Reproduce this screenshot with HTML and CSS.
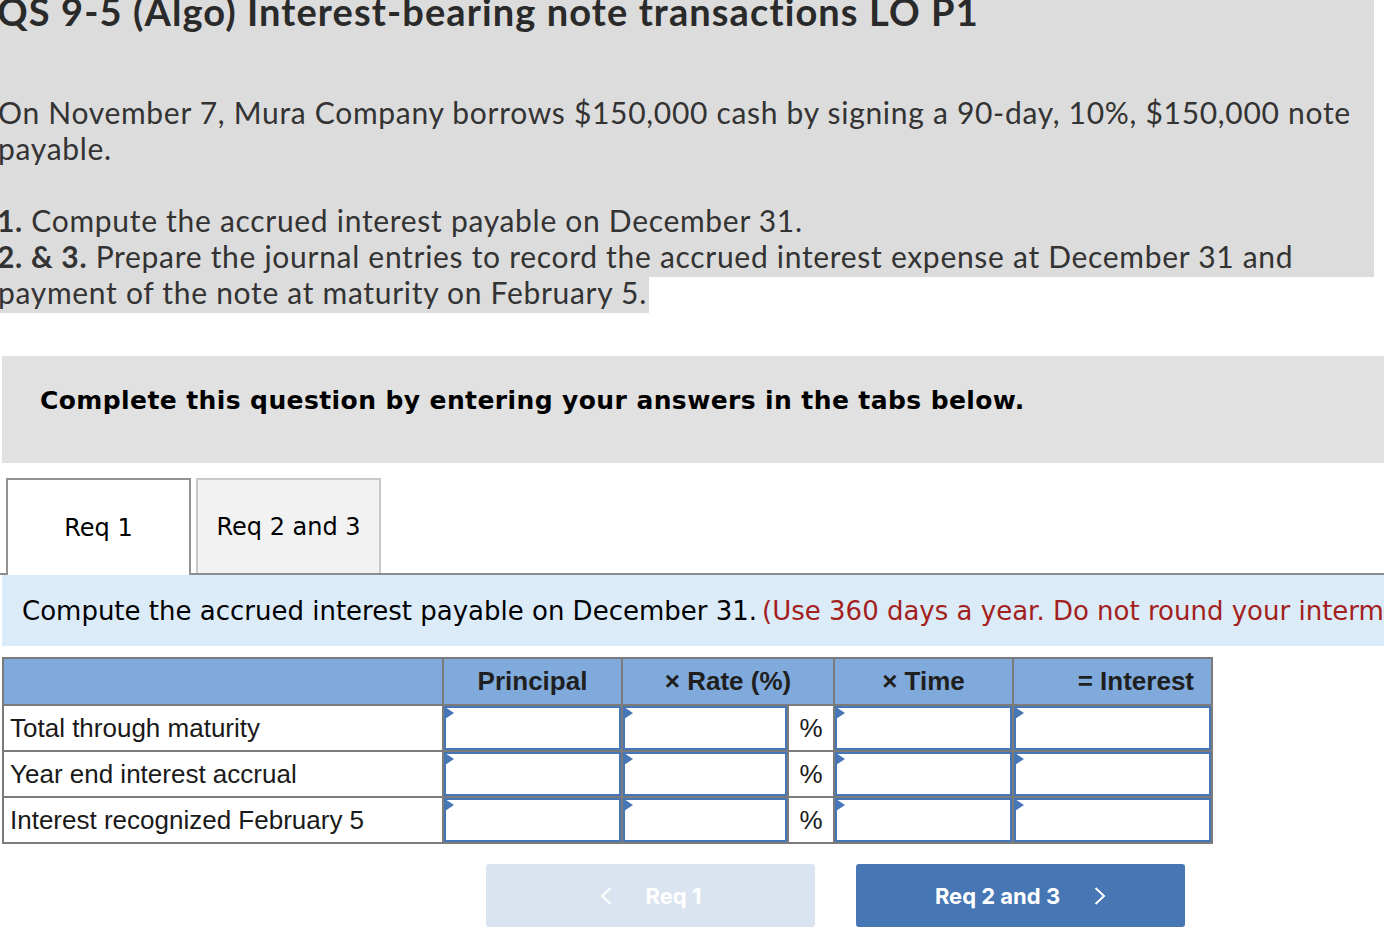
FILE: index.html
```html
<!DOCTYPE html>
<html>
<head>
<meta charset="utf-8">
<link rel="stylesheet" href="styles.css">
</head>
<body>
<div class="intro">
  <h1 class="title">QS 9-5 (Algo) Interest-bearing note transactions LO P1</h1>
  <p class="lead">On November 7, Mura Company borrows $150,000 cash by signing a 90-day, 10%, $150,000 note<br>payable.</p>
  <p class="reqs"><b>1.</b> Compute the accrued interest payable on December 31.<br><b>2. &amp; 3.</b> Prepare the journal entries to record the accrued interest expense at December 31 and</p>
</div>
<div class="tail"><span class="tail-text">payment of the note at maturity on February 5.</span></div>

<div class="notice">Complete this question by entering your answers in the tabs below.</div>

<div class="tabs">
  <div class="tab tab-active">Req 1</div>
  <div class="tab tab-idle">Req 2 and 3</div>
</div>

<div class="instr">Compute the accrued interest payable on December 31. <span class="hint">(Use 360 days a year. Do not round your intermediate calculations. Round your final answers to the nearest whole dollar.)</span></div>

<div class="grid">
  <div class="hd hd-label"></div>
  <div class="hd">Principal</div>
  <div class="hd hd-rate">× Rate (%)</div>
  <div class="hd">× Time</div>
  <div class="hd hd-int">= Interest</div>

  <div class="lbl">Total through maturity</div>
  <div class="inp"></div>
  <div class="inp"></div>
  <div class="pct">%</div>
  <div class="inp"></div>
  <div class="inp"></div>

  <div class="lbl">Year end interest accrual</div>
  <div class="inp"></div>
  <div class="inp"></div>
  <div class="pct">%</div>
  <div class="inp"></div>
  <div class="inp"></div>

  <div class="lbl">Interest recognized February 5</div>
  <div class="inp"></div>
  <div class="inp"></div>
  <div class="pct">%</div>
  <div class="inp"></div>
  <div class="inp"></div>
</div>

<div class="nav">
  <div class="btn btn-prev">
    <svg class="chev" width="12" height="18" viewBox="0 0 12 18"><path d="M10.5 1 L2 9 L10.5 17" fill="none" stroke="#ffffff" stroke-width="2"/></svg>
    <span>Req 1</span>
  </div>
  <div class="btn btn-next">
    <span>Req 2 and 3</span>
    <svg class="chev" width="12" height="18" viewBox="0 0 12 18"><path d="M1.5 1 L10 9 L1.5 17" fill="none" stroke="#ffffff" stroke-width="2"/></svg>
  </div>
</div>
</body>
</html>
```
FILE: styles.css
```css
html, body {
  margin: 0;
  padding: 0;
  background: #ffffff;
}
body {
  width: 1396px;
  height: 936px;
  overflow: hidden;
}
.intro {
  display: flow-root;
  width: 1374px;
  height: 277px;
  background: #dcdcdc;
  color: #333333;
  font-family: Lato, "Open Sans", sans-serif;
}
.title {
  margin: -9px 0 0 -3px;
  font-size: 38px;
  line-height: 40px;
  font-weight: 700;
  letter-spacing: 1.1px;
  color: #2a2a2a;
}
.lead {
  margin: 63px 0 0 -2px;
  font-size: 30px;
  line-height: 36px;
  letter-spacing: 0.7px;
}
.reqs {
  margin: 36px 0 0 -3px;
  font-size: 30px;
  line-height: 36px;
  letter-spacing: 0.7px;
}
.reqs b {
  font-weight: 700;
}
.tail {
  height: 36px;
  font-family: Lato, "Open Sans", sans-serif;
  font-size: 30px;
  color: #333333;
}
.tail-text {
  display: block;
  width: fit-content;
  line-height: 31px;
  padding-bottom: 5px;
  background: #dcdcdc;
  margin-left: -2px;
  padding-right: 2px;
  letter-spacing: 0.7px;
}
.notice {
  margin: 43px 0 0 2px;
  width: 1382px;
  height: 107px;
  box-sizing: border-box;
  padding: 0 0 18px 38px;
  background: #e1e1e1;
  display: flex;
  align-items: center;
  font-family: "DejaVu Sans", Verdana, sans-serif;
  font-weight: 700;
  font-size: 25px;
  letter-spacing: 0.4px;
  color: #000000;
}
.tabs {
  margin-top: 15px;
  width: 1378px;
  height: 95px;
  border-bottom: 2px solid #8c8c8c;
  display: flex;
  gap: 5px;
  padding-left: 6px;
}
.tab {
  width: 185px;
  height: 95px;
  box-sizing: border-box;
  display: flex;
  align-items: center;
  justify-content: center;
  font-family: "DejaVu Sans", Verdana, sans-serif;
  font-size: 24px;
  color: #000000;
}
.tab-active {
  background: #ffffff;
  border: 2px solid #939393;
  border-bottom: none;
  height: 97px;
  margin-bottom: -2px;
}
.tab-idle {
  background: #f2f2f2;
  border: 2px solid #c8c8c8;
  border-bottom: none;
}
.instr {
  margin-left: 2px;
  width: 1382px;
  height: 71px;
  box-sizing: border-box;
  padding-left: 20px;
  background: #dcebf8;
  display: flex;
  align-items: center;
  white-space: nowrap;
  overflow: hidden;
  font-family: "DejaVu Sans", Verdana, sans-serif;
  font-size: 26px;
  color: #000000;
}
.hint {
  color: #a3211c;
  margin-left: 5px;
}
.grid {
  margin: 11px 0 0 2px;
  width: 1211px;
  box-sizing: border-box;
  padding: 2px;
  background: #7b7b7b;
  display: grid;
  grid-template-columns: 438px 177px 164px 44px 177px 197px;
  grid-template-rows: 45px 44px 44px 44px;
  gap: 2px;
  font-family: "Liberation Sans", Arial, sans-serif;
}
.hd {
  background: #80aadc;
  display: flex;
  align-items: center;
  justify-content: center;
  font-weight: 700;
  font-size: 26px;
  color: #1f1f1f;
}
.hd-rate {
  grid-column: span 2;
}
.hd-int {
  justify-content: flex-end;
  padding-right: 17px;
}
.lbl {
  background: #ffffff;
  display: flex;
  align-items: center;
  padding-left: 6px;
  font-size: 26px;
  color: #1a1a1a;
}
.pct {
  background: #ffffff;
  display: flex;
  align-items: center;
  justify-content: center;
  font-size: 26px;
  color: #1a1a1a;
}
.inp {
  position: relative;
  background: #ffffff;
  border: 2px solid #4676b6;
}
.inp::before {
  content: "";
  position: absolute;
  left: -1px;
  top: -1px;
  border-left: 9px solid #4676b6;
  border-top: 6px solid transparent;
  border-bottom: 6px solid transparent;
}
.nav {
  margin: 20px 0 0 486px;
  display: flex;
  gap: 41px;
}
.btn {
  width: 329px;
  height: 63px;
  border-radius: 3px;
  display: flex;
  align-items: center;
  justify-content: center;
  gap: 34px;
  font-family: Inter, Roboto, sans-serif;
  font-weight: 700;
  font-size: 22px;
  color: #ffffff;
}
.btn-prev {
  background: #dae4f0;
}
.btn-next {
  background: #4676b3;
}
.chev {
  display: block;
}
```
